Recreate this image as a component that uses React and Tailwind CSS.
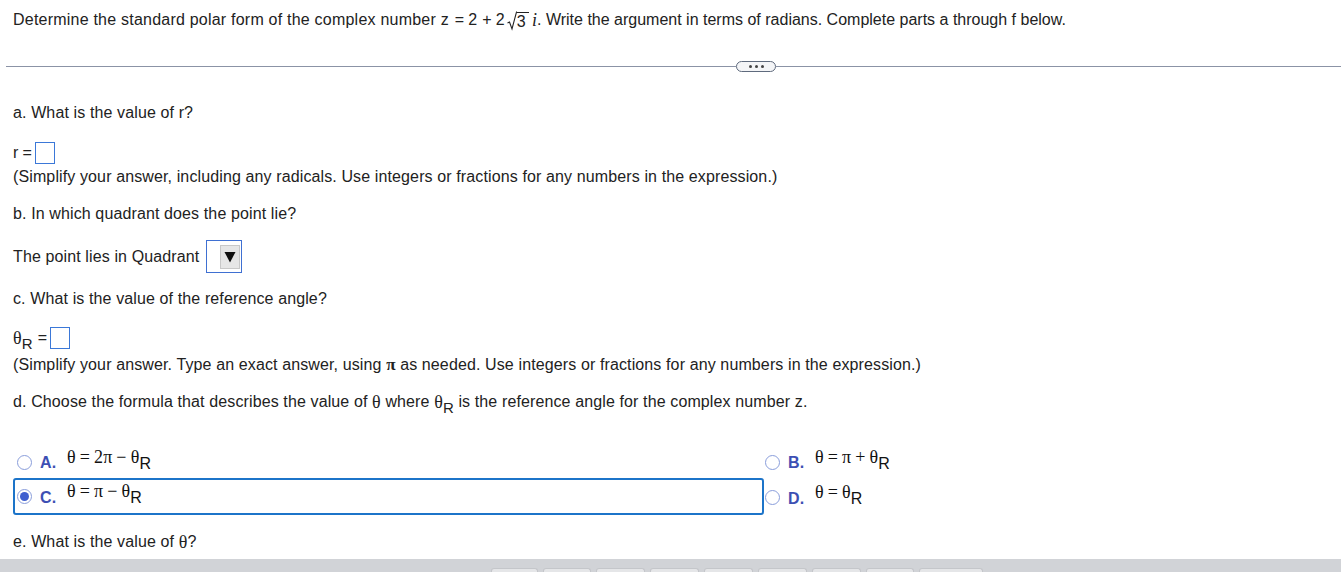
import React from 'react';

const serif = { fontFamily: '"Liberation Serif", "Times New Roman", serif' };

function Theta() {
  return <span className="font-['Liberation_Serif',serif] text-[18px]">θ</span>;
}

function ThetaR() {
  return (
    <span className="inline-flex items-baseline">
      <span className="font-['Liberation_Serif',serif] text-[18px]">θ</span>
      <span className="text-[15px] relative top-[5px]">R</span>
    </span>
  );
}

function AnswerBox() {
  return <span className="inline-block w-[20px] h-[22px] border border-[#3b78d8] bg-white" />;
}

function Radio({ checked }) {
  return (
    <span className="w-[15px] h-[15px] rounded-full border-[1.5px] border-[#8a9edb] bg-white flex items-center justify-center shrink-0">
      {checked && <span className="w-[9px] h-[9px] rounded-full bg-[#3f5fcf]" />}
    </span>
  );
}

function Option({ letter, checked, children }) {
  return (
    <div className="flex items-center h-full">
      <Radio checked={checked} />
      <span className="ml-[8px] w-[27px] font-bold text-[#3d4fb3] text-[16px] relative top-[1px]">{letter}.</span>
      <span className="flex items-baseline text-[18px] text-[#111] relative -top-[5px] font-['Liberation_Serif',serif]">
        {children}
      </span>
    </div>
  );
}

function MathR() {
  return <span className="font-['Liberation_Sans',sans-serif] text-[16px] relative top-[6px]">R</span>;
}

export default function App() {
  const tabs = [47, 48, 49, 49, 49, 49, 49, 48, 64];

  return (
    <div className="w-[1341px] h-[572px] overflow-hidden bg-white text-[#222] text-[16px] tracking-[0.12px] font-['Liberation_Sans',Arial,sans-serif] flex flex-col">
      {/* question text */}
      <div className="pt-[9px] h-[31px] pl-[13px] flex items-center">
        <span className="tracking-[0.22px]">Determine the standard polar form of the complex number z</span>
        <span className="ml-[6px]">=</span>
        <span className="ml-[4px]">2</span>
        <span className="ml-[5px]">+</span>
        <span className="ml-[4px]">2</span>
        <span className="inline-flex items-end ml-[2px]" style={serif}>
          <svg width="10" height="20" viewBox="0 0 10 20" className="relative top-[1px]">
            <path d="M0.5 12 L2.5 11 L5 18 L9.5 1 L10 1" fill="none" stroke="#222" strokeWidth="1.1" />
          </svg>
          <span className="border-t-[1.2px] border-[#222] leading-[17px] pr-[3px] font-['Liberation_Sans',sans-serif]">3</span>
        </span>
        <span className="ml-[3px] italic text-[18px]" style={serif}>i</span>
        <span className="tracking-normal">. Write the argument in terms of radians. Complete parts a through f below.</span>
      </div>

      {/* separator */}
      <div className="mt-[30px] h-[10px] pl-[6px] flex items-center">
        <div className="w-[730px] h-px bg-[#8b93a6]" />
        <div className="w-[40px] h-[11px] rounded-full border border-[#5f6a7d] bg-[#f4f5f7] flex items-center justify-center gap-[3px]">
          <span className="w-[3px] h-[3px] rounded-full bg-[#444]" />
          <span className="w-[3px] h-[3px] rounded-full bg-[#444]" />
          <span className="w-[3px] h-[3px] rounded-full bg-[#444]" />
        </div>
        <div className="flex-1 h-px bg-[#8b93a6]" />
      </div>

      <div className="pl-[13px] flex flex-col">
        <div className="mt-[31px] h-[22px] flex items-center">a. What is the value of r?</div>

        <div className="mt-[18px] h-[22px] flex items-center">
          <span>r</span>
          <span className="ml-[4px] mr-[3px]">=</span>
          <AnswerBox />
        </div>
        <div className="mt-[2px] h-[22px] flex items-center">
          (Simplify your answer, including any radicals. Use integers or fractions for any numbers in the expression.)
        </div>

        <div className="mt-[15px] h-[22px] flex items-center">b. In which quadrant does the point lie?</div>

        <div className="mt-[15px] h-[33px] flex items-center">
          <span>The point lies in Quadrant</span>
          <span className="ml-[7px] w-[36px] h-[33px] border border-[#3f70d2] bg-white flex items-center justify-end pr-[1px]">
            <span className="w-[20px] h-[24px] bg-[#e6e6e6] border border-[#c8c8c8] flex items-center justify-center">
              <svg width="12" height="12" viewBox="0 0 12 12">
                <path d="M0.5 1 L11.5 1 L6 11.5 Z" fill="#111" />
              </svg>
            </span>
          </span>
        </div>

        <div className="mt-[15px] h-[22px] flex items-center">c. What is the value of the reference angle?</div>

        <div className="mt-[17px] h-[22px] flex items-center">
          <ThetaR />
          <span className="ml-[5px] mr-[3px]">=</span>
          <AnswerBox />
        </div>
        <div className="mt-[5px] h-[22px] flex items-center">
          (Simplify your answer. Type an exact answer, using&nbsp;<span className="font-['Liberation_Serif',serif] font-bold text-[17px]">π</span>&nbsp;as needed. Use integers or fractions for any numbers in the expression.)
        </div>

        <div className="mt-[15px] h-[22px] flex items-center">
          d. Choose the formula that describes the value of&nbsp;<Theta />&nbsp;where&nbsp;<ThetaR />&nbsp;is the reference angle for the complex number z.
        </div>

        {/* choices */}
        <div className="mt-[33px] flex">
          <div className="w-[751px] flex flex-col">
            <div className="h-[32px] pl-[4px]">
              <Option letter="A">
                <span>θ</span>
                <span className="mx-[4px]">=</span>
                <span>2π</span>
                <span className="mx-[4px]">−</span>
                <span>θ</span>
                <MathR />
              </Option>
            </div>
            <div className="h-[37px] pl-[2px] border-2 border-[#1c74c9] rounded-[3px]">
              <Option letter="C" checked>
                <span>θ</span>
                <span className="mx-[4px]">=</span>
                <span>π</span>
                <span className="mx-[4px]">−</span>
                <span>θ</span>
                <MathR />
              </Option>
            </div>
          </div>
          <div className="flex flex-col pl-[1px]">
            <div className="h-[32px]">
              <Option letter="B">
                <span>θ</span>
                <span className="mx-[4px]">=</span>
                <span>π</span>
                <span className="mx-[4px]">+</span>
                <span>θ</span>
                <MathR />
              </Option>
            </div>
            <div className="h-[37px] pt-[2px]">
              <Option letter="D">
                <span>θ</span>
                <span className="mx-[4px]">=</span>
                <span>θ</span>
                <MathR />
              </Option>
            </div>
          </div>
        </div>

        <div className="mt-[16px] h-[22px] flex items-center">
          e. What is the value of&nbsp;<Theta />?
        </div>
      </div>

      {/* bottom toolbar */}
      <div className="mt-[6px] flex-1 bg-[#d1d3d7] flex items-end pl-[491px] gap-[5px]">
        {tabs.map((w, i) => (
          <div
            key={i}
            className="h-[4px] bg-[#e5e6e8] border border-b-0 border-[#c4c6ca] rounded-t-[3px]"
            style={{ width: w }}
          />
        ))}
      </div>
    </div>
  );
}
